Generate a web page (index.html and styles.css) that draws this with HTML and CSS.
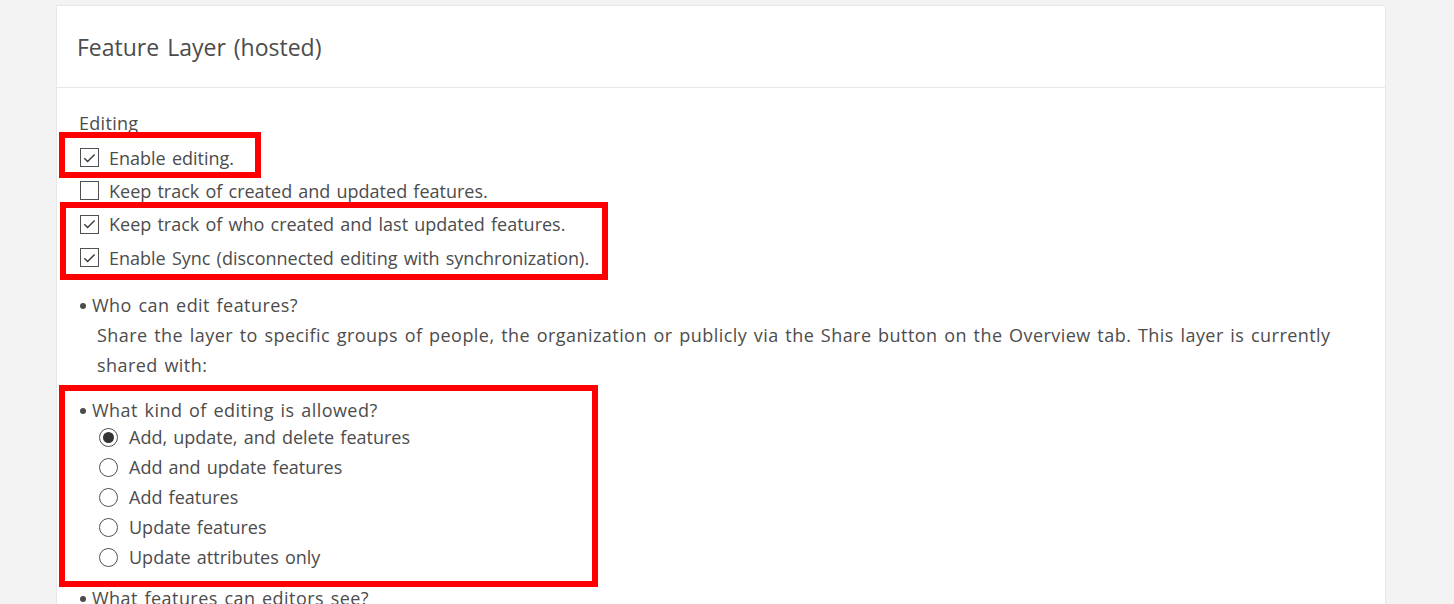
FILE: index.html
```html
<!DOCTYPE html>
<html lang="en">
<head>
<meta charset="utf-8">
<title>Feature Layer (hosted)</title>
<link rel="stylesheet" href="styles.css">
</head>
<body>
<div class="card">
  <div class="card-head">
    <h2 class="card-title">Feature Layer (hosted)</h2>
  </div>
  <div class="card-body">
    <div class="section-label">Editing</div>
    <ul class="checks">
      <li class="check-row"><span class="cb is-checked"><svg viewBox="0 0 18 18" width="18" height="18"><path d="M3.5 9.2 L7 12.6 L14.4 5.2" fill="none" stroke="#3b3b3b" stroke-width="1.5"/></svg></span>Enable editing.</li>
      <li class="check-row"><span class="cb"></span>Keep track of created and updated features.</li>
      <li class="check-row"><span class="cb is-checked"><svg viewBox="0 0 18 18" width="18" height="18"><path d="M3.5 9.2 L7 12.6 L14.4 5.2" fill="none" stroke="#3b3b3b" stroke-width="1.5"/></svg></span>Keep track of who created and last updated features.</li>
      <li class="check-row"><span class="cb is-checked"><svg viewBox="0 0 18 18" width="18" height="18"><path d="M3.5 9.2 L7 12.6 L14.4 5.2" fill="none" stroke="#3b3b3b" stroke-width="1.5"/></svg></span>Enable Sync (disconnected editing with synchronization).</li>
    </ul>
    <ul class="bullets">
      <li class="bullet">
        <div class="bullet-q">Who can edit features?</div>
        <p class="bullet-text">Share the layer to specific groups of people, the organization or publicly via the Share button on the Overview tab. This layer is currently shared with:</p>
      </li>
      <li class="bullet">
        <div class="bullet-q">What kind of editing is allowed?</div>
        <ul class="radios">
          <li class="radio-row"><span class="rb is-checked"></span>Add, update, and delete features</li>
          <li class="radio-row"><span class="rb"></span>Add and update features</li>
          <li class="radio-row"><span class="rb"></span>Add features</li>
          <li class="radio-row"><span class="rb"></span>Update features</li>
          <li class="radio-row"><span class="rb"></span>Update attributes only</li>
        </ul>
      </li>
      <li class="bullet">
        <div class="bullet-q">What features can editors see?</div>
      </li>
    </ul>
  </div>
</div>
<div class="annot annot-1"></div>
<div class="annot annot-2"></div>
<div class="annot annot-3"></div>
</body>
</html>
```

FILE: styles.css
```css
* { box-sizing: border-box; }
html, body { margin: 0; padding: 0; }
body {
  background: #f3f3f3;
  font-family: "Open Sans", Lato, sans-serif;
  color: #4c4c4c;
  font-size: 18px;
  word-spacing: 1.5px;
  height: 604px;
  overflow: hidden;
  position: relative;
}
.card {
  margin: 5px 0 0 56px;
  width: 1330px;
  background: #fff;
  border: 1px solid #e8e8e8;
  height: 640px;
}
.card-head {
  height: 82px;
  border-bottom: 1px solid #e8e8e8;
  display: flex;
  align-items: center;
  padding-left: 20px;
}
.card-title {
  margin: 0;
  font-weight: 400;
  font-size: 23px;
  word-spacing: 2px;
  color: #4c4c4c;
}
.card-body {
  padding: 20px 20px 0 22px;
}
.section-label {
  line-height: 30px;
  letter-spacing: 0.3px;
}
.checks, .bullets, .radios {
  list-style: none;
  margin: 0;
  padding: 0;
}
.checks { margin-top: 3px; }
.check-row {
  display: flex;
  align-items: center;
  height: 33.3px;
}
.cb {
  width: 19px;
  height: 19px;
  border: 1px solid #505050;
  margin: 0 10px 0 1px;
  display: flex;
  align-items: center;
  justify-content: center;
  flex: none;
}
.bullets { margin-top: 16px; }
.bullet {
  position: relative;
  padding-left: 13px;
  margin-bottom: 15px;
}
.bullet::before {
  content: "";
  position: absolute;
  left: 1px;
  top: 13px;
  width: 6px;
  height: 6px;
  border-radius: 50%;
  background: #4c4c4c;
}
.bullet-q {
  line-height: 30px;
  letter-spacing: 0.45px;
}
.bullet-text {
  margin: 0;
  padding-left: 5px;
  line-height: 30px;
  letter-spacing: 0.45px;
}
.radios { margin: -3px 0 -4px 7px; }
.radio-row {
  display: flex;
  align-items: center;
  height: 30px;
}
.rb {
  width: 19px;
  height: 19px;
  border: 1px solid #505050;
  border-radius: 50%;
  margin-right: 11px;
  flex: none;
  display: flex;
  align-items: center;
  justify-content: center;
}
.rb.is-checked::after {
  content: "";
  width: 11px;
  height: 11px;
  border-radius: 50%;
  background: #333;
}
.annot {
  position: absolute;
  border: 6px solid #ff0000;
}
.annot-1 { left: 59px; top: 132px; width: 202px; height: 46px; }
.annot-2 { left: 60px; top: 202px; width: 548px; height: 78px; }
.annot-3 { left: 59px; top: 385px; width: 539px; height: 202px; }
```
